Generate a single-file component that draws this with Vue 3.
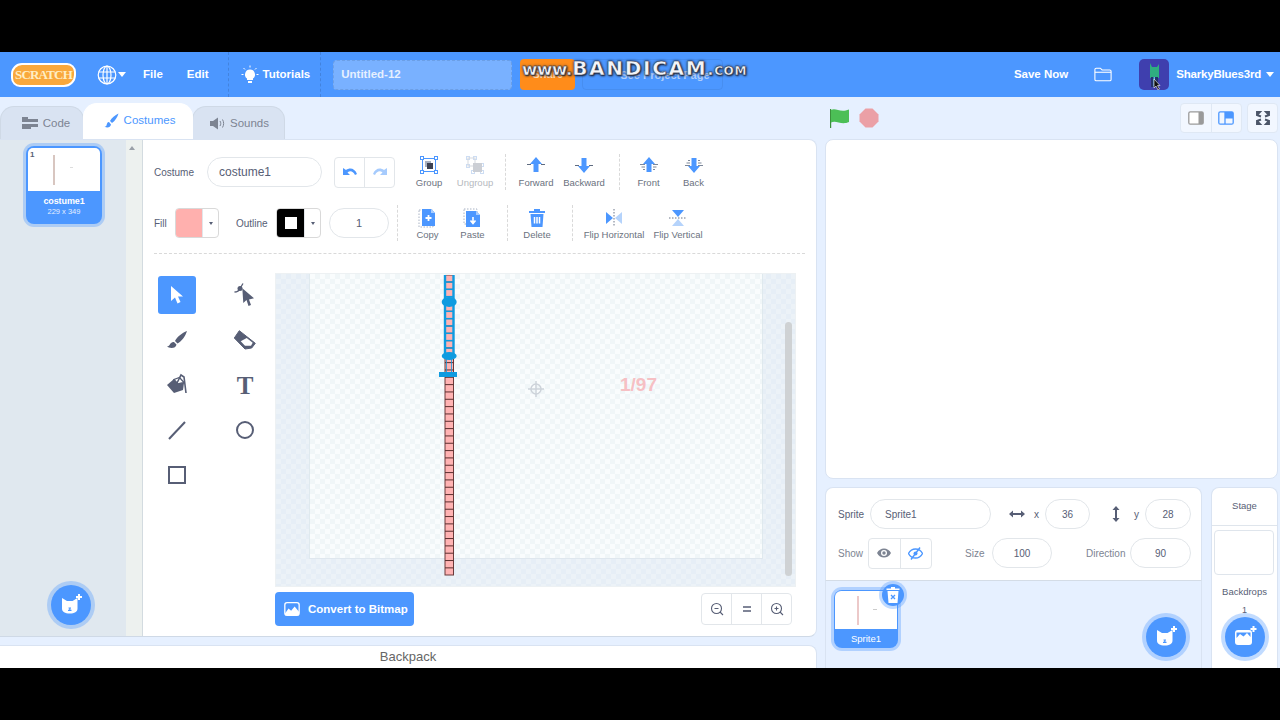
<script setup>
const row1a = [
  { label: 'Group', w: 46, svg: '<rect x="3.5" y="3.5" width="13" height="13" fill="none" stroke="#4c97ff" stroke-width="1"/><g fill="#fff" stroke="#4c97ff"><rect x="1.5" y="1.5" width="3" height="3"/><rect x="15.5" y="1.5" width="3" height="3"/><rect x="1.5" y="15.5" width="3" height="3"/><rect x="15.5" y="15.5" width="3" height="3"/></g><rect x="6" y="6" width="6" height="6" fill="#aab2c2"/><rect x="8" y="8" width="6" height="6" fill="#3d4252"/>' },
  { label: 'Ungroup', w: 46, off: true, svg: '<g fill="#fff" stroke="#9dbce8"><rect x="1.5" y="1.5" width="3" height="3"/><rect x="8.5" y="1.5" width="3" height="3"/><rect x="1.5" y="9.5" width="3" height="3"/><rect x="15.5" y="8.5" width="3" height="3"/><rect x="15.5" y="15.5" width="3" height="3"/><rect x="6.5" y="15.5" width="3" height="3"/></g><rect x="3" y="3" width="7" height="8" fill="none" stroke="#aeb6c4"/><rect x="8" y="8" width="9" height="9" fill="#9aa0ac"/>' }
]
const up = '<path d="M10 2 16 9H12.5V17H7.5V9H4Z" fill="#4c97ff"/>'
const down = '<path d="M10 18 16 11H12.5V3H7.5V11H4Z" fill="#4c97ff"/>'
const row1b = [
  { label: 'Forward', w: 48, svg: up + '<path d="M1 9.5H5M15 9.5H19" stroke="#5f6b80" stroke-width="1"/>' },
  { label: 'Backward', w: 48, svg: down + '<path d="M1 10.5H5M15 10.5H19" stroke="#5f6b80" stroke-width="1"/>' }
]
const row1c = [
  { label: 'Front', w: 45, svg: up + '<path d="M1 9.5H6M14 9.5H19M2.5 12H6M14 12H17.5M4 14.5H6M14 14.5H16" stroke="#7d889a" stroke-width="1.2"/>' },
  { label: 'Back', w: 45, svg: down + '<path d="M1 10.5H6M14 10.5H19M2.5 8H6M14 8H17.5M4 5.5H6M14 5.5H16" stroke="#7d889a" stroke-width="1.2"/>' }
]
const row2a = [
  { label: 'Copy', w: 45, svg: '<rect x="1" y="2" width="14" height="17" fill="none" stroke="#a9b3c4" stroke-dasharray="1.5 1.5"/><path d="M4 1H13L17 5V18H4Z" fill="#4c97ff"/><path d="M13 1V5H17" fill="#a8cdff"/><path d="M10.5 7V13M7.5 10H13.5" stroke="#fff" stroke-width="1.8"/>' },
  { label: 'Paste', w: 45, svg: '<rect x="1" y="1" width="13" height="15" fill="none" stroke="#a9b3c4" stroke-dasharray="1.5 1.5"/><path d="M3 3H13L17 7V19H3Z" fill="#4c97ff"/><path d="M13 3V7H17" fill="#a8cdff"/><path d="M10 9V14M7.5 12.5 10 15.5 12.5 12.5" fill="none" stroke="#fff" stroke-width="1.6"/>' }
]
const row2c = [
  { label: 'Flip Horizontal', w: 64, svg: '<path d="M2 4 9 10 2 16Z" fill="#4c97ff"/><path d="M18 4 11 10 18 16Z" fill="#b5d3fb"/><path d="M10 1V19" stroke="#6b7488" stroke-dasharray="1.5 1.5"/>' },
  { label: 'Flip Vertical', w: 64, svg: '<path d="M4 2 10 9 16 2Z" fill="#4c97ff"/><path d="M4 18 10 11 16 18Z" fill="#b5d3fb"/><path d="M1 10H19" stroke="#6b7488" stroke-dasharray="1.5 1.5"/>' }
]
const rungs = []
for (let y = 282; y < 575; y += 7.33) rungs.push(y)
</script>

<template>
  <div class="screen">
    <div class="black-top"></div>

    <header class="menu">
      <div class="logo"><span>SCRATCH</span></div>
      <svg class="globe" width="20" height="20" viewBox="0 0 20 20" fill="none" stroke="#fff" stroke-width="1.2"><circle cx="10" cy="10" r="8.8"/><ellipse cx="10" cy="10" rx="4" ry="8.8"/><path d="M10 1.2V18.8M1.5 7H18.5M1.5 13H18.5"/></svg>
      <span class="caret c1"></span>
      <span class="mitem m-file">File</span>
      <span class="mitem m-edit">Edit</span>
      <span class="mdiv d1"></span>
      <svg class="bulb" width="18" height="20" viewBox="0 0 18 20"><path d="M9 4.5a5 5 0 0 0-3 9v1.5h6V13.5a5 5 0 0 0-3-9Z" fill="#fff"/><rect x="7" y="16" width="4" height="2" fill="#fff"/><path d="M9 .5V2.5M2.5 3 4 4.5M15.5 3 14 4.5M.5 9.5H2.5M15.5 9.5H17.5" stroke="#fff" stroke-width="1"/></svg>
      <span class="mitem m-tut">Tutorials</span>
      <span class="mdiv d2"></span>
      <div class="title-box">Untitled-12</div>
      <div class="share">Share</div>
      <div class="see">See Project Page</div>
      <span class="spacer"></span>
      <span class="mitem m-save">Save Now</span>
      <svg class="folder" width="18" height="15" viewBox="0 0 20 16" fill="none" stroke="#fff" stroke-width="1.2"><path d="M1 5V2.5A1.5 1.5 0 0 1 2.5 1H7L9 3H17.500A1.500 1.500 0 0 1 19 4.500V13.500A1.500 1.500 0 0 1 17.500 15H2.500A1.500 1.500 0 0 1 1 13.500Z"/><path d="M1 5.500H19"/></svg>
      <div class="avatar">
        <svg width="30" height="31" viewBox="0 0 30 31"><path d="M11 4 13 8H18L20 5V19H11Z" fill="#2fae80"/><rect x="12" y="18" width="7" height="10" fill="#23326b"/><rect x="14.500" y="18" width="1.500" height="9" fill="#5fb7e8"/><path d="M15 20 15 29 17 27 19 31 20.500 30 18.500 26.500 21 26.500Z" fill="#111" stroke="#fff" stroke-width=".6"/></svg>
      </div>
      <span class="mitem m-user">SharkyBlues3rd</span>
      <span class="caret c2"></span>
    </header>

    <main class="body">
      <section class="left">
        <nav class="tabs">
          <div class="tab t-code">
            <svg width="16" height="12" viewBox="0 0 16 12"><path d="M0 0H6V2H16V5H0ZM0 7H16V10H9V12H0Z" fill="#7d8492"/></svg>
            <span>Code</span>
          </div>
          <div class="tab t-cost">
            <svg width="15" height="15" viewBox="0 0 15 15"><path d="M14.500.5C11 2 7.500 5 6 8L8 10C11 8 13.500 4 14.500.5ZM5 9C3 9 3 11 2.500 12.500 2 13.500 1 13.500.5 13.500 2.500 15 6.500 15 7 11.500Z" fill="#4c97ff"/></svg>
            <span>Costumes</span>
          </div>
          <div class="tab t-snd">
            <svg width="15" height="13" viewBox="0 0 15 13"><path d="M0 4H3L8 .5V12.500L3 9H0Z" fill="#7d8492"/><path d="M10 4C11 5.500 11 7.500 10 9M12.500 2.500C14 5 14 8 12.500 10.500" fill="none" stroke="#7d8492"/></svg>
            <span>Sounds</span>
          </div>
        </nav>

        <div class="panel">
          <aside class="selector">
            <div class="sel-list">
              <div class="cos-card">
                <div class="cos-thumb">
                  <span class="cos-num">1</span>
                  <i class="mini-line"></i><i class="mini-dot"></i>
                </div>
                <div class="cos-name">costume1</div>
                <div class="cos-size">229 x 349</div>
              </div>
            </div>
            <div class="sel-scroll"><span class="tri"></span></div>
            <div class="fab fab-cos">
              <svg width="24" height="24" viewBox="0 0 24 24"><use href="#cat"/></svg>
            </div>
          </aside>

          <div class="paint">
            <div class="p-row r1">
              <span class="lbl l-cos">Costume</span>
              <div class="pill cos-input">costume1</div>
              <div class="undo">
                <div class="u-cell"><svg width="14" height="10" viewBox="0 0 14 10"><path d="M0 1V8H7L4.500 5.500C7 3.500 10 4 12 8L14 7C12 1.500 7 0 3 3Z" fill="#4c97ff"/></svg></div>
                <div class="u-cell"><svg width="14" height="10" viewBox="0 0 14 10"><path d="M14 1V8H7L9.500 5.500C7 3.500 4 4 2 8L0 7C2 1.500 7 0 11 3Z" fill="#a6cbfd"/></svg></div>
              </div>
              <div class="btns b1">
                <div v-for="b in row1a" :key="b.label" class="tbtn" :class="{ off: b.off }" :style="{ width: b.w + 'px' }"><svg width="20" height="20" viewBox="0 0 20 20" v-html="b.svg"></svg><span>{{ b.label }}</span></div>
              </div>
              <i class="vdiv v1"></i>
              <div class="btns">
                <div v-for="b in row1b" :key="b.label" class="tbtn" :style="{ width: b.w + 'px' }"><svg width="20" height="20" viewBox="0 0 20 20" v-html="b.svg"></svg><span>{{ b.label }}</span></div>
              </div>
              <i class="vdiv v2"></i>
              <div class="btns">
                <div v-for="b in row1c" :key="b.label" class="tbtn" :style="{ width: b.w + 'px' }"><svg width="20" height="20" viewBox="0 0 20 20" v-html="b.svg"></svg><span>{{ b.label }}</span></div>
              </div>
            </div>

            <div class="p-row r2">
              <span class="lbl l-fill">Fill</span>
              <div class="swatch sw-fill"><b></b><em><u></u></em></div>
              <span class="lbl l-out">Outline</span>
              <div class="swatch sw-out"><b><s></s></b><em><u></u></em></div>
              <div class="pill num">1</div>
              <i class="vdiv d-a"></i>
              <div class="btns">
                <div v-for="b in row2a" :key="b.label" class="tbtn" :style="{ width: b.w + 'px' }"><svg width="20" height="20" viewBox="0 0 20 20" v-html="b.svg"></svg><span>{{ b.label }}</span></div>
              </div>
              <i class="vdiv d-b"></i>
              <div class="tbtn del">
                <svg width="20" height="20" viewBox="0 0 20 20"><path d="M7 1H13V3H18V5H2V3H7ZM3.500 6H16.500L15.500 19H4.500Z" fill="#4c97ff"/><path d="M7.500 9V15.500M10 9V15.500M12.500 9V15.500" stroke="#fff" stroke-width="1.5"/></svg>
                <span>Delete</span>
              </div>
              <i class="vdiv d-c"></i>
              <div class="btns">
                <div v-for="b in row2c" :key="b.label" class="tbtn" :style="{ width: b.w + 'px' }"><svg width="20" height="20" viewBox="0 0 20 20" v-html="b.svg"></svg><span>{{ b.label }}</span></div>
              </div>
            </div>

            <div class="work">
              <div class="tools">
                <div class="tool on"><svg width="20" height="20" viewBox="0 0 20 20"><path d="M4 1 4 16 8 12.500 10.500 18.500 13.500 17 11 11.500H16Z" fill="#fff"/></svg></div>
                <div class="tool"><svg width="24" height="24" viewBox="0 0 24 24"><path d="M9.300 5.300 10.300 20 13.500 17 15.500 23 18 22 16 16.500 21 15.300Z" fill="#575e75"/><circle cx="7" cy="5.500" r="2.500" fill="#575e75"/><path d="M1.500 9C4 9 6 8 7 5.500M7 5.500 10 .5" fill="none" stroke="#575e75" stroke-width="1.3"/></svg></div>
                <div class="tool"><svg width="24" height="24" viewBox="0 0 24 24"><path d="M22 3C17 5 12 9 10 13L12.500 15.500C17 13 20.500 8 22 3ZM9 14C5 13.500 5.500 18 2 18.500 4 20.500 11 21 11.500 16.500Z" fill="#575e75"/></svg></div>
                <div class="tool"><svg width="24" height="24" viewBox="0 0 24 24"><path d="M6.300 2.700 1.300 10 12 21 18.700 20 22.300 15.300Z" fill="#575e75" stroke="#575e75" stroke-linejoin="round"/><path d="M7.700 13.300 12 17.700H18L19.700 14.700 13.700 10Z" fill="#fff"/></svg></div>
                <div class="tool"><svg width="24" height="24" viewBox="0 0 24 24"><path d="M9 6 2 12 9 20 18 17 19 10Z" fill="#575e75"/><path d="M9 6.500 13 11 19 9.500 14.500 4.500Z" fill="#fff" stroke="#575e75" stroke-width="1.3"/><path d="M12 10 16 2 19 4 21 20" fill="none" stroke="#575e75" stroke-width="1.6"/></svg></div>
                <div class="tool"><span class="t-glyph">T</span></div>
                <div class="tool"><svg width="24" height="24" viewBox="0 0 24 24"><path d="M4 21 20 4" stroke="#575e75" stroke-width="2"/></svg></div>
                <div class="tool"><svg width="24" height="24" viewBox="0 0 24 24"><circle cx="12" cy="12" r="8" fill="none" stroke="#575e75" stroke-width="2"/></svg></div>
                <div class="tool"><svg width="24" height="24" viewBox="0 0 24 24"><rect x="4" y="4" width="16" height="16" fill="none" stroke="#575e75" stroke-width="2"/></svg></div>
              </div>

              <div class="canvas-col">
                <div class="canvas">
                  <div class="artboard"></div>
                  <svg class="crosshair" width="16" height="16" viewBox="0 0 16 16" fill="none" stroke="#cdd3da" stroke-width="1.5"><circle cx="8" cy="8" r="5"/><path d="M8 0V16M0 8H16"/></svg>
                  <span class="count">1/97</span>
                  <svg class="ladder" width="24" height="302" viewBox="437 275 24 302">
                    <rect x="445" y="275" width="8.5" height="300" fill="#ffb3b3" stroke="#6b3a3a" stroke-width="1"/>
                    <path v-for="y in rungs" :key="y" :d="`M445 ${y}H453.5`" stroke="#5b2f2f" stroke-width="1"/>
                    <path d="M445 275V357M453.5 275V357" stroke="#0f9be0" stroke-width="2.4"/>
                    <path v-for="y in rungs.filter(v => v < 357)" :key="'b' + y" :d="`M445 ${y}H453.5`" stroke="#0f9be0" stroke-width="1.5"/>
                    <ellipse cx="449.2" cy="302" rx="7.5" ry="5" fill="#0f9be0"/>
                    <ellipse cx="449.2" cy="356" rx="7.5" ry="4" fill="#0f9be0"/>
                    <path d="M446.5 358V372M451.5 358V372" stroke="#0f9be0" stroke-width=".8"/>
                    <rect x="439" y="372" width="18" height="5" fill="#0f9be0"/>
                  </svg>
                  <div class="v-thumb"></div>
                </div>

                <div class="canvas-foot">
                  <div class="convert">
                    <svg width="16" height="14" viewBox="0 0 18 16"><rect x=".8" y=".8" width="16.4" height="14.4" rx="2.5" fill="none" stroke="#fff" stroke-width="1.5"/><path d="M1 13 5 7.5 8 10 12 5 17 11V15H1Z" fill="#fff"/></svg>
                    <span>Convert to Bitmap</span>
                  </div>
                  <div class="zoomers">
                    <div class="z-cell"><svg width="14" height="14" viewBox="0 0 14 14" fill="none" stroke="#575e75" stroke-width="1.1"><circle cx="6.5" cy="6.5" r="5"/><path d="M4.5 6.5H8.5M10 10 13 13"/></svg></div>
                    <div class="z-cell"><svg width="12" height="10" viewBox="0 0 12 10" fill="none" stroke="#575e75" stroke-width="1.4"><path d="M2 3H10M2 7H10"/></svg></div>
                    <div class="z-cell"><svg width="14" height="14" viewBox="0 0 14 14" fill="none" stroke="#575e75" stroke-width="1.1"><circle cx="6.5" cy="6.5" r="5"/><path d="M4.5 6.5H8.5M6.5 4.5V8.5M10 10 13 13"/></svg></div>
                  </div>
                </div>
              </div>
            </div>
          </div>
        </div>

        <div class="backpack">Backpack</div>
      </section>

      <section class="right">
        <div class="controls">
          <svg class="flag" width="22" height="20" viewBox="0 0 22 20"><path d="M2 1H3.2V20H2Z" fill="#3b8f3b"/><path d="M3 2C8 -.5 12 5 21 1.5V14C13 17.5 8 11.5 3 14.5Z" fill="#4cbf56"/></svg>
          <svg class="stop" width="20" height="20" viewBox="0 0 20 20"><path d="M6.5 .5H13.5L19.5 6.5V13.5L13.5 19.5H6.5L.5 13.5V6.5Z" fill="#eba0a6"/></svg>
          <span class="spacer"></span>
          <div class="view-group">
            <div class="v-cell"><svg width="16" height="14" viewBox="0 0 16 14"><rect x=".8" y=".8" width="14.4" height="12.4" rx="1.5" fill="#fff" stroke="#9a9a9a" stroke-width="1.3"/><rect x="10.5" y="1" width="4.5" height="12" fill="#9a9a9a"/></svg></div>
            <div class="v-cell"><svg width="16" height="14" viewBox="0 0 16 14"><rect x=".8" y=".8" width="14.4" height="12.4" rx="1.5" fill="none" stroke="#4c97ff" stroke-width="1.3"/><rect x="7" y="1" width="8" height="6.5" fill="#4c97ff"/><path d="M7 1V13" stroke="#4c97ff" stroke-width="1.3"/></svg></div>
          </div>
          <div class="view-single"><svg width="14" height="14" viewBox="0 0 14 14" fill="none" stroke="#4b5568" stroke-width="1.9"><path d="M1 4V1H4L1 4 5 5.5M13 4V1H10L13 4 9 5.5M1 10V13H4L1 10 5 8.5M13 10V13H10L13 10 9 8.5"/></svg></div>
        </div>
        <div class="stage"></div>
        <div class="bottom">
          <div class="sprites">
            <div class="info">
              <div class="i-row">
                <span class="ilbl il-sprite">Sprite</span>
                <div class="pill ipt i-name">Sprite1</div>
                <svg class="ar-h" width="16" height="8" viewBox="0 0 16 8"><path d="M0 4 4 .5V3H12V.5L16 4 12 7.5V5H4V7.5Z" fill="#575e75"/></svg>
                <span class="ilbl il-x">x</span>
                <div class="pill ipt i-x">36</div>
                <svg class="ar-v" width="8" height="16" viewBox="0 0 8 16"><path d="M4 0 7.5 4H5V12H7.5L4 16 .5 12H3V4H.5Z" fill="#575e75"/></svg>
                <span class="ilbl il-y">y</span>
                <div class="pill ipt i-y">28</div>
              </div>
              <div class="i-row second">
                <span class="ilbl il-show">Show</span>
                <div class="show-group">
                  <div class="s-cell"><svg width="14" height="10" viewBox="0 0 14 10"><path d="M0 5C3 -1 11 -1 14 5 11 11 3 11 0 5Z" fill="#7d8492"/><circle cx="7" cy="5" r="3" fill="#fff"/><circle cx="7" cy="5" r="1.7" fill="#7d8492"/></svg></div>
                  <div class="s-cell"><svg width="15" height="13" viewBox="0 0 15 13"><path d="M.5 6.5C3.5 .5 11.5 .5 14.5 6.5 11.5 12.5 3.5 12.5 .5 6.5Z" fill="none" stroke="#4c97ff" stroke-width="1.3"/><circle cx="7.5" cy="6.5" r="2" fill="#4c97ff"/><path d="M12 .5 3 12.5" stroke="#4c97ff" stroke-width="1.4"/></svg></div>
                </div>
                <span class="ilbl il-size">Size</span>
                <div class="pill ipt i-size">100</div>
                <span class="ilbl il-dir">Direction</span>
                <div class="pill ipt i-dir">90</div>
              </div>
            </div>
            <div class="sprite-list">
              <div class="spr-card">
                <div class="spr-thumb"><i class="spr-line"></i><i class="spr-dot"></i></div>
                <div class="spr-name">Sprite1</div>
                <div class="spr-del">
                  <svg width="14" height="16" viewBox="0 0 14 16"><path d="M5 0H9V1.5H13.5V3H.5V1.5H5ZM1.5 4H12.5L11.500 16H2.500Z" fill="#fff"/><path d="M5 8 9 12M9 8 5 12" stroke="#4c97ff" stroke-width="1.3"/></svg>
                </div>
              </div>
              <div class="fab fab-spr"><svg width="24" height="24" viewBox="0 0 24 24"><use href="#cat"/></svg></div>
            </div>
          </div>
          <div class="stage-sel">
            <div class="st-head">Stage</div>
            <div class="st-thumb"></div>
            <div class="st-lbl">Backdrops</div>
            <div class="st-count">1</div>
            <div class="fab fab-bd">
              <svg width="24" height="24" viewBox="0 0 24 24"><rect x="2" y="5" width="17" height="15" rx="3" fill="#fff"/><path d="M3.5 13 7 9 10.5 11.5 14 8 17.5 12V7.5H3.5Z" fill="#4c97ff"/><path d="M20.5 1V7M17.5 4H23.5" stroke="#fff" stroke-width="2"/></svg>
            </div>
          </div>
        </div>
      </section>
    </main>

    <div class="black-bot"></div>
    <div class="watermark"><span class="w1">www.</span><span class="w2">BANDICAM</span><span class="w3">.com</span></div>

    <svg width="0" height="0" class="defs"><defs><g id="cat"><path d="M3 5 8 8H13.5L18.5 5V15.5C18.5 19 15.5 20.5 10.8 20.5 6 20.5 3 19 3 15.5Z" fill="#fff"/><path d="M9.5 15H12M10.8 15V17M9 17.3H12.5" stroke="#4c97ff" stroke-width="1.2" fill="none"/><path d="M20 1V7M17 4H23" stroke="#fff" stroke-width="2"/></g></defs></svg>
  </div>
</template>

<style>
html, body { margin: 0; background: #000; }
</style>

<style scoped>
.screen { width: 1280px; height: 720px; overflow: hidden; position: relative; display: flex; flex-direction: column; background: #000; font-family: "Liberation Sans", Arial, sans-serif; color: #575e75; }
.black-top { height: 52px; flex: none; }
.black-bot { height: 52px; flex: none; }
.spacer { flex: 1; }

.menu { height: 45px; flex: none; background: #4c97ff; display: flex; align-items: center; color: #fff; font-size: 11.5px; font-weight: 700; }
.logo { margin-left: 11px; width: 65px; height: 24px; border-radius: 11px 9px 12px 9px; background: #f9a83c; border: 2px solid #fff; box-sizing: border-box; display: flex; align-items: center; justify-content: center; flex: none; }
.logo span { font-size: 13px; letter-spacing: -.8px; font-weight: 700; color: #ffeec4; font-family: "Liberation Serif", serif; }
.globe { margin-left: 21px; flex: none; }
.caret { width: 0; height: 0; border-left: 4px solid transparent; border-right: 4px solid transparent; border-top: 5px solid #fff; flex: none; }
.c1 { margin-left: 1px; }
.mitem { flex: none; white-space: nowrap; margin-bottom: 2px; }
.m-file { margin-left: 17px; }
.m-edit { margin-left: 24px; }
.mdiv { width: 0; height: 45px; border-left: 1px dashed rgba(0,0,0,.13); flex: none; }
.d1 { margin-left: 19px; }
.bulb { margin-left: 12px; flex: none; }
.m-tut { margin-left: 4px; }
.d2 { margin-left: 10px; }
.title-box { margin-left: 12px; width: 179px; height: 30px; box-sizing: border-box; background: rgba(255,255,255,.25); border: 1px dashed rgba(0,0,0,.1); border-radius: 4px; line-height: 26px; padding-left: 7px; flex: none; color: #e6f0ff; }
.share { margin-left: 8px; width: 55px; height: 31px; background: #ff8c1a; border-radius: 4px; flex: none; text-align: center; line-height: 31px; font-size: 11px; color: #ffd9b0; }
.see { margin-left: 7px; width: 141px; height: 31px; box-sizing: border-box; border: 1px solid rgba(0,0,0,.06); border-radius: 4px; flex: none; line-height: 31px; padding-left: 37px; font-size: 11px; color: #aecdfa; }
.m-save { margin-right: 26px; }
.folder { margin-right: 27px; flex: none; }
.avatar { width: 30px; height: 31px; background: #3f3fae; border-radius: 5px; flex: none; margin-right: 7px; overflow: hidden; }
.m-user { letter-spacing: -.2px; }
.c2 { margin-left: 5px; margin-right: 6px; }

.body { height: 571px; flex: none; background: #e6f0ff; display: flex; }
.left { width: 817px; flex: none; display: flex; flex-direction: column; }
.tabs { height: 36px; margin-top: 6px; display: flex; flex: none; align-items: flex-end; position: relative; }
.tab { height: 33px; box-sizing: border-box; display: flex; align-items: center; justify-content: center; gap: 5px; font-size: 11.5px; color: #7d8492; background: #d9e3f2; border: 1px solid #cfd9e6; border-bottom: 0; border-radius: 14px 14px 0 0; flex: none; }
.t-code { width: 84px; padding-left: 8px; margin-left: 0; }
.t-cost { width: 110px; height: 36px; background: #fff; border-color: #fff; color: #4c97ff; position: relative; z-index: 1; margin-left: -1px; padding-bottom: 3px; padding-left: 3px; }
.t-snd { width: 93px; margin-left: -1px; padding-left: 2px; }

.panel { height: 498px; flex: none; display: flex; background: #fff; border: 1px solid #d9e3f2; border-left: 0; border-bottom: 1px solid #cfd9e6; border-radius: 0 8px 8px 0; box-sizing: border-box; overflow: hidden; }
.selector { width: 143px; flex: none; display: flex; position: relative; border-right: 1px solid #d3dbe0; box-sizing: border-box; background: #e0e8ef; }
.sel-list { width: 126px; flex: none; }
.sel-scroll { width: 16px; flex: none; background: #edf1ef; position: relative; }
.tri { position: absolute; left: 3px; top: 6px; width: 0; height: 0; border-left: 3.5px solid transparent; border-right: 3.5px solid transparent; border-bottom: 4px solid #9aa0a8; }
.cos-card { margin: 6px 0 0 26px; width: 76px; height: 78px; box-sizing: border-box; background: #4c97ff; border-radius: 8px; box-shadow: 0 0 0 3px rgba(76,151,255,.35); padding: 2px; color: #fff; text-align: center; position: relative; }
.cos-thumb { height: 43px; background: #fff; border-radius: 5px 5px 0 0; position: relative; }
.cos-num { position: absolute; left: 2px; top: 2px; font-size: 8px; font-weight: 700; color: #575e75; }
.mini-line { position: absolute; left: 25px; top: 7px; width: 1.5px; height: 30px; background: #d8c6c0; }
.mini-dot { position: absolute; left: 42px; top: 19px; width: 3px; height: 1px; background: #ddd; }
.cos-name { font-size: 9px; font-weight: 700; margin-top: 5px; line-height: 11px; letter-spacing: -.1px; }
.cos-size { font-size: 7.5px; line-height: 10px; opacity: .85; }

.fab { position: absolute; width: 40px; height: 40px; border-radius: 50%; background: #4c97ff; box-shadow: 0 0 0 4px rgba(76,151,255,.35); display: flex; align-items: center; justify-content: center; }
.fab-cos { left: 51px; top: 445px; }

.paint { flex: 1; min-width: 0; padding: 15px 0 0 11px; box-sizing: border-box; }
.p-row { display: flex; align-items: center; flex: none; font-size: 10px; }
.r1 { height: 36px; box-sizing: border-box; padding-bottom: 2px; }
.r1 .tbtn { gap: 2px; }
.r2 { height: 38px; margin-top: 13px; width: 651px; position: relative; }
.r2 .tbtn { margin-top: 2px; }
.r2::after { content: ""; position: absolute; left: 0; right: 0; bottom: -12px; border-bottom: 1px dashed #d9d9d9; }
.lbl { flex: none; }
.l-cos { width: 53px; }
.pill { box-sizing: border-box; border: 1px solid #e2e6ea; border-radius: 16px; background: #fff; flex: none; }
.cos-input { width: 115px; height: 30px; font-size: 12px; line-height: 28px; padding-left: 11px; }
.undo { margin-left: 12px; width: 61px; height: 31px; display: flex; border: 1px solid #e2e6ea; border-radius: 4px; box-sizing: border-box; flex: none; }
.u-cell { flex: 1; display: flex; align-items: center; justify-content: center; }
.u-cell + .u-cell { border-left: 1px solid #e2e6ea; }
.btns { display: flex; flex: none; }
.b1 { margin-left: 11px; }
.tbtn { display: flex; flex-direction: column; align-items: center; flex: none; gap: 1px; white-space: nowrap; font-size: 9.5px; line-height: 12px; color: #6b7280; }
.tbtn svg { flex: none; }
.tbtn.off { opacity: .5; }
.vdiv { width: 0; height: 36px; border-left: 1px dashed #d9d9d9; flex: none; margin: 0 6px; }
.v1 { margin-left: 7px; }
.v2 { margin-left: 11px; }
.l-fill { width: 21px; }
.swatch { width: 44px; height: 30px; display: flex; border: 1px solid #d9d9d9; border-radius: 4px; box-sizing: border-box; overflow: hidden; flex: none; }
.swatch b { flex: 1; background: #ffb0ae; position: relative; }
.swatch em { width: 15px; flex: none; display: flex; align-items: center; justify-content: center; border-left: 1px solid #e2e6ea; }
.swatch u { width: 0; height: 0; border-left: 2.5px solid transparent; border-right: 2.5px solid transparent; border-top: 3px solid #575e75; }
.l-out { margin-left: 17px; width: 40px; }
.sw-out { width: 45px; }
.sw-out b { background: #000; display: flex; align-items: center; justify-content: center; }
.sw-out s { width: 12px; height: 12px; background: #fff; display: block; }
.num { margin-left: 8px; width: 60px; height: 30px; text-align: center; line-height: 28px; font-size: 11px; }
.d-a { margin: 0 7px 0 8px; }
.d-b { margin: 0 5px 0 12px; }
.del { width: 48px; }
.d-c { margin: 0 9px 0 11px; }

.work { display: flex; margin-top: 31px; }
.tools { width: 106px; margin-left: 4px; display: grid; grid-template-columns: 38px 38px; column-gap: 30px; row-gap: 7px; grid-auto-rows: 38px; align-content: start; margin-top: 3px; flex: none; }
.tool { display: flex; align-items: center; justify-content: center; border-radius: 3px; }
.tool.on { background: #4c97ff; }
.t-glyph { font-family: "Liberation Serif", serif; font-weight: 700; font-size: 25px; color: #575e75; line-height: 1; }

.canvas-col { margin-left: 11px; width: 521px; flex: none; }
.canvas { width: 521px; height: 314px; position: relative; background-color: #e6eef6; background-image: conic-gradient(#ecf2f7 25%, transparent 0 50%, #ecf2f7 0 75%, transparent 0); background-size: 10px 10px; border: 1px solid #edf1f3; box-sizing: border-box; overflow: hidden; }
.artboard { position: absolute; left: 33px; top: 0; width: 454px; height: 285px; background-color: #f9fcfd; background-image: conic-gradient(#f0f6f8 25%, transparent 0 50%, #f0f6f8 0 75%, transparent 0); background-size: 10px 10px; border-bottom: 1px solid #dfe7ee; border-left: 1px solid #dfe9ee; border-right: 1px solid #dfe9ee; box-sizing: border-box; }
.crosshair { position: absolute; left: 252px; top: 107px; }
.count { position: absolute; left: 344px; top: 100px; font-size: 19px; font-weight: 700; color: #f6c0c4; line-height: 22px; }
.ladder { position: absolute; left: 161px; top: 1px; }
.v-thumb { position: absolute; left: 509px; top: 48px; width: 7px; height: 254px; background: #cfd2d4; border-radius: 4px; }
.canvas-foot { display: flex; justify-content: space-between; margin-top: 5px; width: 517px; }
.convert { width: 139px; height: 34px; background: #4c97ff; border-radius: 4px; color: #fff; font-size: 11.5px; font-weight: 700; display: flex; align-items: center; padding-left: 9px; gap: 8px; box-sizing: border-box; }
.convert svg { flex: none; }
.convert span { white-space: nowrap; }
.zoomers { width: 91px; height: 32px; margin-top: 1px; display: flex; border: 1px solid #e2e6ea; border-radius: 4px; box-sizing: border-box; }
.z-cell { flex: 1; display: flex; align-items: center; justify-content: center; }
.z-cell + .z-cell { border-left: 1px solid #e2e6ea; }

.backpack { height: 23px; margin-top: 8px; background: #fff; border: 1px solid #d9e3f2; border-bottom: 0; border-left: 0; border-radius: 0 8px 0 0; text-align: center; font-size: 13px; line-height: 22px; box-sizing: border-box; color: #666; flex: none; }

.right { margin-left: 8px; width: 453px; flex: none; display: flex; flex-direction: column; }
.controls { height: 30px; margin-top: 6px; display: flex; align-items: center; flex: none; }
.flag { margin-left: 3px; flex: none; }
.stop { margin-left: 9px; flex: none; }
.view-group { width: 62px; height: 30px; display: flex; background: #f2f7ff; border: 1px solid #dfe8f4; border-radius: 4px; box-sizing: border-box; flex: none; }
.v-cell { flex: 1; display: flex; align-items: center; justify-content: center; }
.v-cell + .v-cell { border-left: 1px solid #dfe8f4; }
.view-single { margin-left: 5px; width: 31px; height: 30px; background: #f2f7ff; border: 1px solid #dfe8f4; border-radius: 4px; box-sizing: border-box; display: flex; align-items: center; justify-content: center; flex: none; }
.stage { height: 340px; margin-top: 6px; background: #fff; border: 1px solid #d9e3f2; border-radius: 8px; box-sizing: border-box; flex: none; }
.bottom { display: flex; margin-top: 8px; height: 181px; flex: none; gap: 9px; }
.sprites { width: 377px; flex: none; display: flex; flex-direction: column; }
.info { height: 94px; background: #fff; border: 1px solid #d9e3f2; border-bottom: 1px solid #d4dce6; border-radius: 8px 8px 0 0; box-sizing: border-box; padding: 11px 0 0 12px; flex: none; font-size: 10px; }
.i-row { display: flex; align-items: center; height: 30px; }
.i-row.second { margin-top: 9px; }
.ilbl { flex: none; }
.ipt { height: 30px; line-height: 29px; text-align: center; font-size: 10px; }
.il-sprite { width: 32px; }
.i-name { width: 121px; text-align: left; padding-left: 14px; }
.ar-h { margin-left: 18px; flex: none; }
.il-x { margin-left: 9px; width: 11px; }
.i-x { width: 45px; }
.ar-v { margin-left: 22px; flex: none; }
.il-y { margin-left: 14px; width: 11px; }
.i-y { width: 46px; }
.il-show { width: 30px; color: #7d8492; }
.show-group { width: 64px; height: 31px; display: flex; border: 1px solid #e2e6ea; border-radius: 4px; box-sizing: border-box; flex: none; }
.s-cell { flex: 1; display: flex; align-items: center; justify-content: center; }
.s-cell + .s-cell { border-left: 1px solid #e2e6ea; }
.il-size { margin-left: 33px; width: 27px; color: #7d8492; }
.i-size { width: 60px; }
.il-dir { margin-left: 34px; width: 44px; color: #7d8492; }
.i-dir { width: 61px; }

.sprite-list { flex: 1; position: relative; background: #e6f0ff; border-left: 1px solid #d9e3f2; border-right: 1px solid #d9e3f2; }
.spr-card { position: absolute; left: 8px; top: 9px; width: 64px; height: 58px; background: #4c97ff; border-radius: 8px; box-shadow: 0 0 0 3px rgba(76,151,255,.35); box-sizing: border-box; padding: 1px; color: #fff; text-align: center; }
.spr-thumb { height: 38px; background: #fff; border-radius: 6px 6px 0 0; position: relative; }
.spr-line { position: absolute; left: 22px; top: 5px; width: 1.5px; height: 29px; background: #ecc9c9; }
.spr-dot { position: absolute; left: 38px; top: 18px; width: 4px; height: 1px; background: #ccc; }
.spr-name { font-size: 9.5px; font-weight: 400; line-height: 19px; }
.spr-del { position: absolute; left: 48px; top: -6px; width: 22px; height: 22px; border-radius: 50%; background: #4c97ff; box-shadow: 0 0 0 3px rgba(76,151,255,.35); display: flex; align-items: center; justify-content: center; }
.fab-spr { left: 320px; top: 36px; }

.stage-sel { width: 67px; flex: none; background: #fff; border: 1px solid #d9e3f2; border-bottom: 0; border-radius: 8px 8px 0 0; box-sizing: border-box; position: relative; text-align: center; font-size: 9.5px; }
.st-head { height: 37px; line-height: 36px; border-bottom: 1px solid #dfe5ec; }
.st-thumb { margin: 4px 3px 0 2px; height: 45px; border: 1px solid #dfe5ec; border-radius: 4px; box-sizing: border-box; }
.st-lbl { margin-top: 11px; line-height: 12px; }
.st-count { margin-top: 7px; line-height: 10px; font-size: 9px; }
.fab-bd { left: 13px; top: 129px; }

.watermark { position: absolute; left: 522px; top: 54px; white-space: nowrap; color: #f2f4f8; font-family: "DejaVu Sans", sans-serif; font-weight: 700; -webkit-text-stroke: .4px #26304a; text-shadow: 0 0 3px #1b2236, 1px 1px 2px #1b2236; line-height: 28px; }
.w1 { font-size: 16.5px; letter-spacing: -.2px; }
.w2 { font-size: 20px; letter-spacing: 1.7px; }
.w3 { font-size: 16.5px; font-variant: small-caps; letter-spacing: .6px; }
.defs { position: absolute; }
</style>
